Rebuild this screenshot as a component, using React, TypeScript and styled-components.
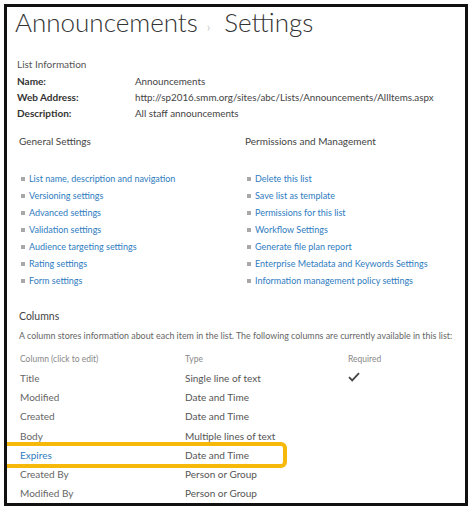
import React from "react";
import styled, { createGlobalStyle } from "styled-components";

const GlobalStyle = createGlobalStyle`
  html, body {
    margin: 0;
    padding: 0;
    background: #fff;
  }
  body {
    font-family: Lato, "Open Sans", "Liberation Sans", sans-serif;
  }
`;

const generalLinks = [
  "List name, description and navigation",
  "Versioning settings",
  "Advanced settings",
  "Validation settings",
  "Audience targeting settings",
  "Rating settings",
  "Form settings",
];

const permissionLinks = [
  "Delete this list",
  "Save list as template",
  "Permissions for this list",
  "Workflow Settings",
  "Generate file plan report",
  "Enterprise Metadata and Keywords Settings",
  "Information management policy settings",
];

const columns = [
  { name: "Title", type: "Single line of text", required: true },
  { name: "Modified", type: "Date and Time" },
  { name: "Created", type: "Date and Time" },
  { name: "Body", type: "Multiple lines of text" },
  { name: "Expires", type: "Date and Time", highlight: true },
  { name: "Created By", type: "Person or Group" },
  { name: "Modified By", type: "Person or Group" },
];

const CheckIcon = () => (
  <svg width="12" height="10" viewBox="0 0 12 10">
    <path d="M1 5.2 L4.2 8.4 L11 1.2" fill="none" stroke="#444" strokeWidth="1.8" />
  </svg>
);

const App: React.FC = () => {
  return (
    <>
      <GlobalStyle />
      <Frame>
        <Title>
          Announcements<Crumb>›</Crumb>Settings
        </Title>

        <SectionLabel>List Information</SectionLabel>
        <InfoGrid>
          <InfoKey>Name:</InfoKey>
          <InfoValue>Announcements</InfoValue>
          <InfoKey>Web Address:</InfoKey>
          <InfoValue>http://sp2016.smm.org/sites/abc/Lists/Announcements/AllItems.aspx</InfoValue>
          <InfoKey>Description:</InfoKey>
          <InfoValue>All staff announcements</InfoValue>
        </InfoGrid>

        <SettingsColumns>
          <div>
            <GroupTitle>General Settings</GroupTitle>
            <LinkList>
              {generalLinks.map((l) => (
                <LinkItem key={l}>{l}</LinkItem>
              ))}
            </LinkList>
          </div>
          <div>
            <GroupTitle>Permissions and Management</GroupTitle>
            <LinkList>
              {permissionLinks.map((l) => (
                <LinkItem key={l}>{l}</LinkItem>
              ))}
            </LinkList>
          </div>
        </SettingsColumns>

        <ColumnsTitle>Columns</ColumnsTitle>
        <ColumnsIntro>
          A column stores information about each item in the list. The following columns are currently available in this list:
        </ColumnsIntro>

        <ColumnTable>
          <HeadRow>
            <span>Column (click to edit)</span>
            <span>Type</span>
            <span>Required</span>
          </HeadRow>
          {columns.map((c) => (
            <ColRow key={c.name}>
              <ColName highlight={c.highlight}>{c.name}</ColName>
              <span>{c.type}</span>
              <span>{c.required ? <CheckIcon /> : null}</span>
              {c.highlight && <Highlight />}
            </ColRow>
          ))}
        </ColumnTable>
      </Frame>
    </>
  );
};

export default App;

const Frame = styled.div`
  margin: 4px 0 0 4px;
  width: 464px;
  height: 502px;
  box-sizing: border-box;
  border: 3px solid #111;
  padding: 0 0 0 10px;
  overflow: hidden;
  position: relative;
  color: #444;
`;

const Title = styled.div`
  font-size: 26px;
  font-weight: 300;
  line-height: 30px;
  color: #333;
  margin-left: -2px;
  display: flex;
  align-items: baseline;
  white-space: nowrap;
`;

const Crumb = styled.span`
  font-size: 13px;
  color: #aaa;
  margin: 0 14px 0 9px;
`;

const SectionLabel = styled.div`
  font-size: 10px;
  color: #555;
  margin-top: 14px;
  line-height: 16px;
`;

const InfoGrid = styled.div`
  display: grid;
  grid-template-columns: 118px 1fr;
  font-size: 10px;
  line-height: 16px;
  margin-top: 1px;
  white-space: nowrap;
`;

const InfoKey = styled.div`
  font-weight: 700;
  color: #333;
`;

const InfoValue = styled.div`
  color: #444;
  font-size: 9.8px;
`;

const SettingsColumns = styled.div`
  display: grid;
  grid-template-columns: 226px 1fr;
  margin-top: 12px;
  padding-left: 2px;
`;

const GroupTitle = styled.div`
  font-size: 10px;
  color: #444;
  line-height: 16px;
`;

const LinkList = styled.ul`
  list-style: none;
  margin: 21px 0 0;
  padding: 0;
`;

const LinkItem = styled.li`
  font-size: 9px;
  line-height: 17px;
  color: #2f7cc0;
  white-space: nowrap;
  display: flex;
  align-items: center;
  &::before {
    content: "";
    width: 4px;
    height: 4px;
    background: #a8a8a8;
    margin: 0 4px 0 2px;
  }
`;

const ColumnsTitle = styled.div`
  font-size: 10.5px;
  color: #444;
  line-height: 16px;
  margin-top: 19px;
  padding-left: 2px;
`;

const ColumnsIntro = styled.div`
  font-size: 8.9px;
  color: #666;
  line-height: 16px;
  margin-top: 4px;
  padding-left: 2px;
  white-space: nowrap;
`;

const ColumnTable = styled.div`
  margin-top: 7px;
  padding-left: 3px;
`;

const HeadRow = styled.div`
  display: grid;
  grid-template-columns: 165px 163px 1fr;
  font-size: 8.5px;
  color: #888;
  line-height: 16px;
  margin-bottom: 2px;
`;

const ColRow = styled.div`
  display: grid;
  grid-template-columns: 165px 163px 1fr;
  font-size: 10px;
  color: #555;
  line-height: 19px;
  position: relative;
  white-space: nowrap;
  align-items: center;
  height: 19.2px;
`;

const ColName = styled.span<{ highlight?: boolean }>`
  color: ${(p) => (p.highlight ? "#2f7cc0" : "#666")};
`;

const Highlight = styled.div`
  position: absolute;
  left: -18px;
  top: -4px;
  width: 285px;
  height: 26px;
  box-sizing: border-box;
  border: 4px solid #f6b90a;
  border-radius: 6px;
  pointer-events: none;
`;
